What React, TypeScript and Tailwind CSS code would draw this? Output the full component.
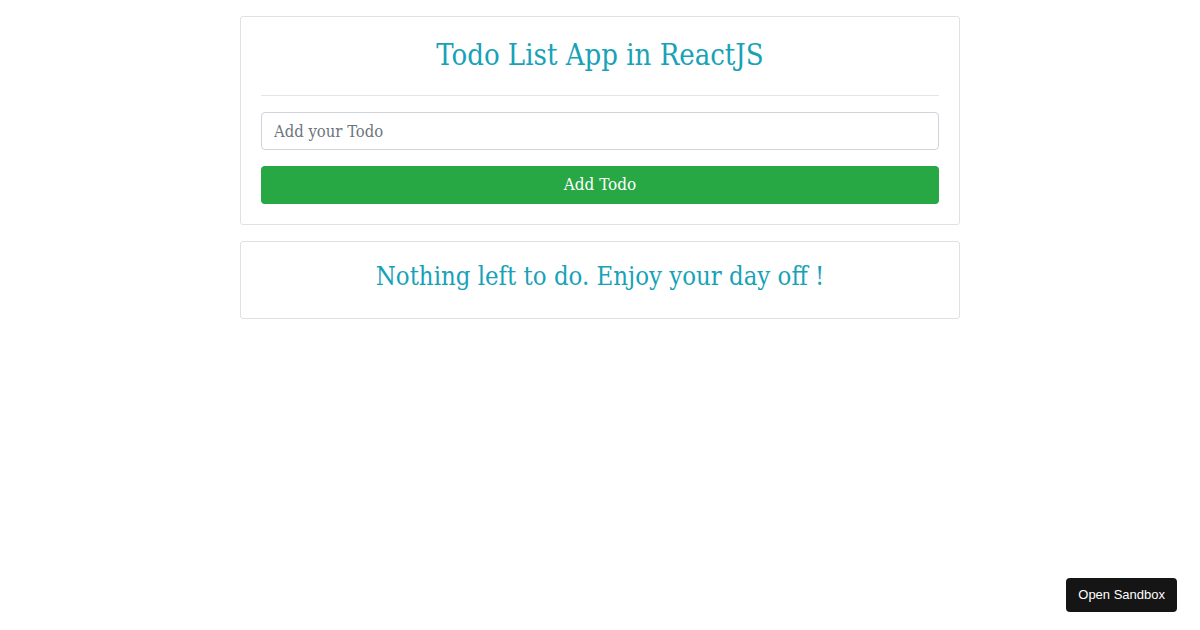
import React from "react";

export default function App() {
  return (
    <div className="min-h-[630px] w-full bg-white relative font-['DejaVu_Serif_Condensed','DejaVu_Serif',serif]">
      <div className="w-[720px] mx-auto pt-4 flex flex-col gap-4">
        <div className="border border-[#dfe1e3] rounded-[3px] px-5 pt-[18px] pb-5">
          <h1 className="text-center text-[#17a2b8] text-[29px] leading-[40px] pb-5 border-b border-[#e3e6e8]">
            Todo List App in ReactJS
          </h1>
          <input
            className="mt-4 w-full h-[38px] border border-[#ced4da] rounded-[4px] px-3 text-[16.5px] text-[#495057] placeholder:text-[#6c757d] outline-none font-['DejaVu_Serif_Condensed','DejaVu_Serif',serif]"
            placeholder="Add your Todo"
          />
          <button className="mt-4 w-full h-[38px] bg-[#28a745] rounded-[4px] text-white text-[17px] font-['DejaVu_Serif_Condensed','DejaVu_Serif',serif]">
            Add Todo
          </button>
        </div>
        <div className="border border-[#dfe1e3] rounded-[3px] h-[78px] flex items-center justify-center pb-[8px]">
          <p className="text-[#17a2b8] text-[25.5px] leading-[32px]">Nothing left to do. Enjoy your day off !</p>
        </div>
      </div>
      <div className="absolute right-[23px] top-[578px] h-[34px] px-[12px] flex items-center bg-[#151515] text-white text-[13px] rounded-[4px] font-['Liberation_Sans',Arial,sans-serif]">
        Open Sandbox
      </div>
    </div>
  );
}
